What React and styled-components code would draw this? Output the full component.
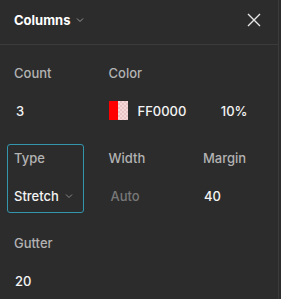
import React from "react";
import styled, { createGlobalStyle } from "styled-components";

const GlobalStyle = createGlobalStyle`
  html, body {
    margin: 0;
    padding: 0;
    background: #2c2c2c;
  }
  body {
    font-family: Inter, "Noto Sans", sans-serif;
  }
`;

const Panel = styled.div`
  width: 279px;
  height: 299px;
  box-sizing: border-box;
  background: #2c2c2c;
  border-right: 1px solid #3a3a3a;
  color: #f2f2f2;
`;

const Header = styled.div`
  display: flex;
  align-items: center;
  justify-content: space-between;
  height: 45px;
  box-sizing: border-box;
  padding: 0 17px 5px 14px;
  border-bottom: 1px solid #3b3b3b;
`;

const Title = styled.div`
  display: flex;
  align-items: center;
  gap: 6px;
  font-size: 13px;
  font-weight: 700;
  color: #ffffff;
`;

const Chevron = styled.svg`
  width: 8px;
  height: 8px;
  color: ${(props) => props.color || "#9a9a9a"};
`;

const CloseButton = styled.svg`
  width: 14px;
  height: 14px;
  color: #e6e6e6;
`;

const Grid = styled.div`
  display: grid;
  grid-template-columns: 77px 77px 77px;
  column-gap: 17.5px;
  row-gap: 16px;
  padding: 14px 7px 0 7px;
`;

const Field = styled.div`
  display: flex;
  flex-direction: column;
  height: 69px;
  box-sizing: border-box;
  padding: 6px 6px 8px 6px;
  border: 1px solid ${(props) => (props.active ? "#3396ad" : "transparent")};
  border-radius: 3px;
  grid-column: ${(props) => props.span || "auto"};
`;

const Label = styled.div`
  font-size: 13px;
  font-weight: 500;
  line-height: 14px;
  color: #b3b3b3;
`;

const Value = styled.div`
  display: flex;
  align-items: center;
  gap: ${(props) => props.gap || "6px"};
  margin-top: 23px;
  font-size: 13px;
  font-weight: 500;
  line-height: 16px;
  padding-left: ${(props) => props.indent || "0"};
  color: ${(props) => (props.muted ? "#787878" : "#f4f4f4")};
`;

const Swatch = styled.div`
  display: flex;
  width: 19px;
  height: 19px;
  margin-top: -2px;
  margin-bottom: -1px;
`;

const SwatchSolid = styled.div`
  flex: 1;
  background: #ff0000;
`;

const SwatchAlpha = styled.div`
  flex: 1;
  background-color: #f6d8d8;
  background-image:
    linear-gradient(45deg, #e8c4c4 25%, transparent 25%, transparent 75%, #e8c4c4 75%),
    linear-gradient(45deg, #e8c4c4 25%, transparent 25%, transparent 75%, #e8c4c4 75%);
  background-size: 4px 4px;
  background-position: 0 0, 2px 2px;
`;

const ColorRow = styled.div`
  display: flex;
  align-items: center;
  justify-content: space-between;
  width: 110px;
`;

const DownIcon = ({ color }) => (
  <Chevron viewBox="0 0 8 8" color={color}>
    <path d="M1 2.5 L4 5.5 L7 2.5" fill="none" stroke="currentColor" strokeWidth="1" />
  </Chevron>
);

const App = () => {
  return (
    <>
      <GlobalStyle />
      <Panel>
        <Header>
          <Title>
            Columns
            <DownIcon />
          </Title>
          <CloseButton viewBox="0 0 14 14">
            <path d="M1 1 L13 13 M13 1 L1 13" stroke="currentColor" strokeWidth="1.4" />
          </CloseButton>
        </Header>
        <Grid>
          <Field>
            <Label>Count</Label>
            <Value indent="2px">3</Value>
          </Field>
          <Field span="2 / 4">
            <Label>Color</Label>
            <Value gap="10px">
              <Swatch>
                <SwatchSolid />
                <SwatchAlpha />
              </Swatch>
              <ColorRow>
                <span>FF0000</span>
                <span>10%</span>
              </ColorRow>
            </Value>
          </Field>
          <Field active>
            <Label>Type</Label>
            <Value>
              Stretch
              <DownIcon color="#8a8a8a" />
            </Value>
          </Field>
          <Field>
            <Label>Width</Label>
            <Value muted indent="2px">Auto</Value>
          </Field>
          <Field>
            <Label>Margin</Label>
            <Value indent="1px">40</Value>
          </Field>
          <Field>
            <Label>Gutter</Label>
            <Value indent="1px">20</Value>
          </Field>
        </Grid>
      </Panel>
    </>
  );
};

export default App;
